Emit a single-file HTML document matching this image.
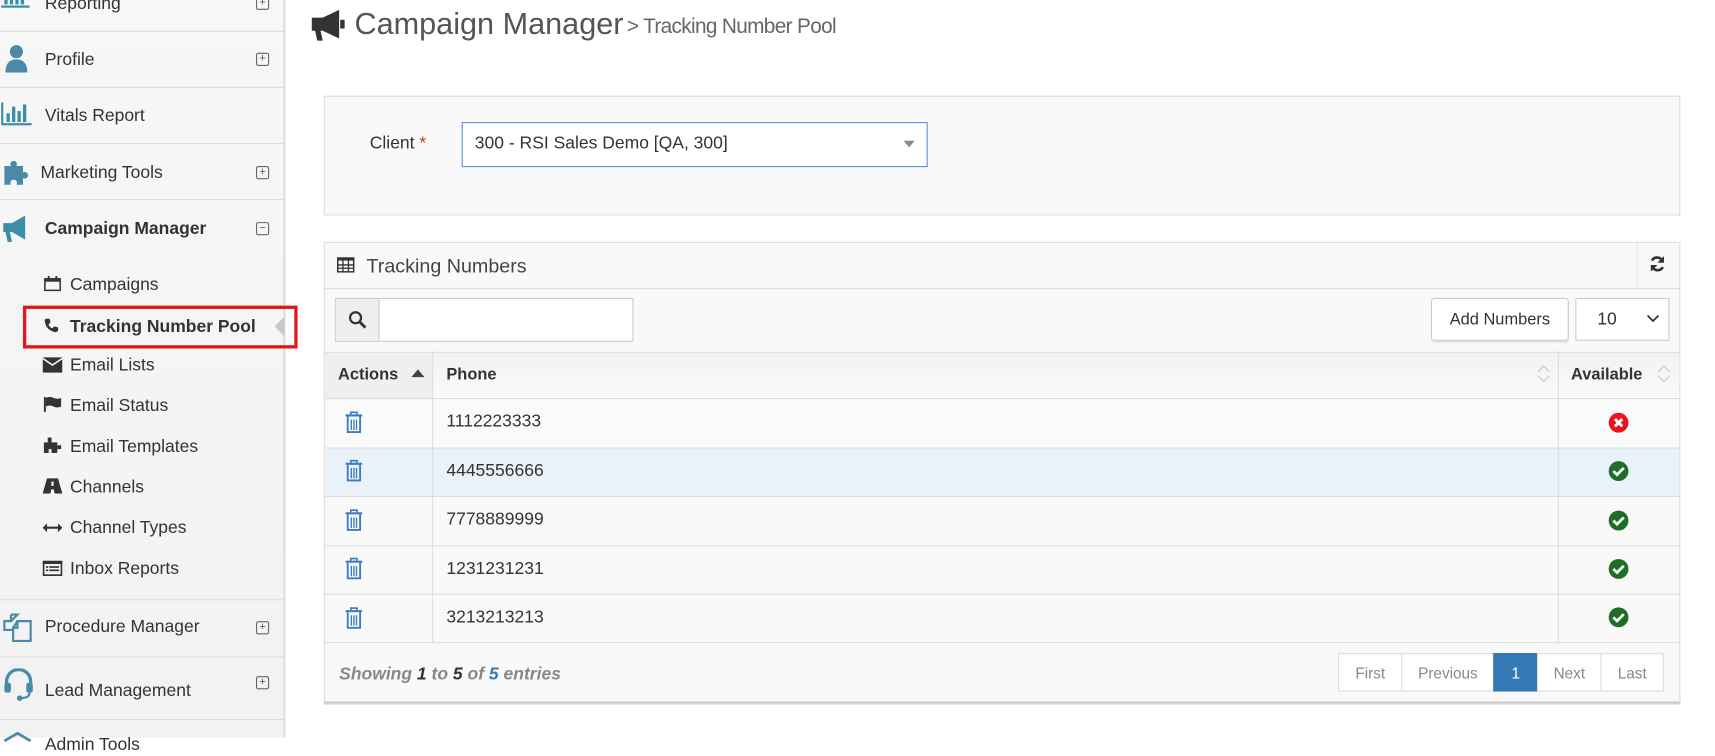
<!DOCTYPE html>
<html><head><meta charset="utf-8"><style>
html,body{margin:0;padding:0;width:1715px;height:737px;overflow:hidden;background:#fff;}
#w{position:absolute;left:0;top:0;width:1568px;height:671px;transform:scale(1.094,1.0994);transform-origin:0 0;font-family:"Liberation Sans",sans-serif;color:#333;}
.a{position:absolute;}
#side{left:0;top:0;width:259px;height:671px;background:linear-gradient(#f7f7f7,#f2f2f2);border-right:2px solid #ddd;}
.sep{position:absolute;left:0;width:259px;height:1px;background:#ddd;}
.mi{position:absolute;left:41px;font-size:16px;color:#333;line-height:20px;}
.pl{position:absolute;left:234px;width:10px;height:10px;border:1px solid #666;border-radius:2px;font-size:10px;line-height:9px;text-align:center;color:#555;}
.si{position:absolute;left:64px;font-size:16px;line-height:20px;color:#333;}
.ic{position:absolute;left:39px;width:18px;height:14px;}
.panel{position:absolute;left:296px;width:1238px;border:1px solid #ddd;background:#f9f9f9;}
.cell{position:absolute;font-size:16px;line-height:20px;}
.pg{position:absolute;top:594px;height:35px;border:1px solid #ddd;background:#fff;color:#888;font-size:14px;line-height:35px;text-align:center;box-sizing:border-box;}
</style></head><body><div id="w">
<div id="side" class="a">
 <svg class="a" style="left:1px;top:-8px" width="26" height="16"><g fill="#3b8ea5"><rect x="3" y="6" width="3" height="6"/><rect x="8" y="2" width="3" height="10"/><rect x="13" y="4" width="3" height="8"/><rect x="18" y="0" width="3" height="12"/><rect x="0" y="13" width="26" height="2"/></g></svg>
 <div class="mi" style="top:-6px">Reporting</div><div class="pl" style="top:-3px">+</div>
 <div class="sep" style="top:28px"></div>
 <svg class="a" style="left:5px;top:40px" width="22" height="26"><circle cx="10" cy="7" r="6" fill="#4a8aa8"/><path d="M0 26 Q0 14 10 14 Q20 14 20 26Z" fill="#4a8aa8"/></svg>
 <div class="mi" style="top:45px">Profile</div><div class="pl" style="top:48px">+</div>
 <div class="sep" style="top:79px"></div>
 <svg class="a" style="left:1px;top:93px" width="28" height="22"><g fill="#3b8ea5"><rect x="5" y="10" width="3" height="8"/><rect x="10" y="4" width="3" height="14"/><rect x="15" y="8" width="3" height="10"/><rect x="20" y="2" width="3" height="16"/><rect x="0" y="0" width="2" height="20"/><rect x="0" y="19" width="28" height="2"/></g></svg>
 <div class="mi" style="top:96px">Vitals Report</div>
 <div class="sep" style="top:130px"></div>
 <svg class="a" style="left:2px;top:143px" width="26" height="26"><path d="M2 8h6a3 3 0 1 1 5 0h6v6a3 3 0 1 1 0 5v6H13a3 3 0 1 0-5 0H2Z" fill="#4a8aa8"/></svg>
 <div class="mi" style="left:37px;top:148px">Marketing Tools</div><div class="pl" style="top:151px">+</div>
 <div class="sep" style="top:181px"></div>
 <svg class="a" style="left:1px;top:195px" width="28" height="26"><path d="M2 8h8l12-7v22l-12-7H8l2 9H6l-2-9H2Z" fill="#3b8ea5"/></svg>
 <div class="mi" style="top:199px;font-weight:bold">Campaign Manager</div><div class="pl" style="top:202px">−</div>
 <svg class="ic" style="top:251px" viewBox="0 0 18 16"><rect x="1" y="3" width="16" height="12" fill="none" stroke="#333" stroke-width="1.6"/><rect x="1" y="3" width="16" height="3" fill="#333"/><rect x="4" y="0" width="2" height="4" fill="#333"/><rect x="12" y="0" width="2" height="4" fill="#333"/></svg>
 <div class="si" style="top:250px">Campaigns</div>
 <div class="a" style="left:21px;top:278px;width:245px;height:33px;border:3px solid #e4141b;"></div>
 <svg class="ic" style="top:289px;width:16px" viewBox="0 0 16 16"><path d="M3 1l3 0 1 4-2 2q1 3 4 4l2-2 4 1v3q-1 2-3 2Q2 13 1 3q0-2 2-2Z" fill="#333"/></svg>
 <div class="si" style="top:288px;font-weight:bold">Tracking Number Pool</div>
 <div class="a" style="left:251px;top:288px;width:0;height:0;border-top:9px solid transparent;border-bottom:9px solid transparent;border-right:9px solid #c8c8c8"></div>
 <svg class="ic" style="top:325px" viewBox="0 0 18 14"><rect x="0" y="0" width="18" height="14" rx="1" fill="#333"/><path d="M0 1l9 6 9-6" stroke="#f5f5f5" stroke-width="1.5" fill="none"/></svg>
 <div class="si" style="top:323px">Email Lists</div>
 <svg class="ic" style="top:361px" viewBox="0 0 18 16"><rect x="0" y="0" width="2" height="16" fill="#333"/><path d="M2 1q4-2 8 0t8 0v9q-4 2-8 0t-8 0Z" fill="#333"/></svg>
 <div class="si" style="top:360px">Email Status</div>
 <svg class="ic" style="top:398px" viewBox="0 0 18 16"><rect x="4" y="0" width="4" height="5" fill="#333"/><rect x="0" y="5" width="14" height="11" fill="#333"/><rect x="14" y="8" width="4" height="4" fill="#333"/><rect x="5" y="12" width="3" height="4" fill="#f4f4f4"/></svg>
 <div class="si" style="top:397px">Email Templates</div>
 <svg class="ic" style="top:435px" viewBox="0 0 18 14"><path d="M4 0h10l4 14h-7l-1-4H8l-1 4H0Z" fill="#333"/><rect x="8" y="3" width="2" height="4" fill="#f5f5f5"/></svg>
 <div class="si" style="top:434px">Channels</div>
 <svg class="ic" style="top:473px" viewBox="0 0 18 8"><path d="M0 4l4-4v3h10V0l4 4-4 4V5H4v3Z" fill="#333"/></svg>
 <div class="si" style="top:471px">Channel Types</div>
 <svg class="ic" style="top:510px" viewBox="0 0 18 14"><rect x="0.8" y="0.8" width="16.4" height="12.4" fill="none" stroke="#333" stroke-width="1.6"/><rect x="0" y="0" width="18" height="3" fill="#333"/><g fill="#333"><rect x="3" y="5" width="2" height="1.5"/><rect x="6" y="5" width="9" height="1.5"/><rect x="3" y="8" width="2" height="1.5"/><rect x="6" y="8" width="9" height="1.5"/></g></svg>
 <div class="si" style="top:508px">Inbox Reports</div>
 <div class="sep" style="top:545px"></div>
 <svg class="a" style="left:2px;top:557px" width="28" height="28"><path d="M8 2h6l-6 6v0M8 2v6h-6v8h8" fill="none" stroke="#4a8aa8" stroke-width="2"/><path d="M14 8h12v18H10V14h4Z M10 14l4-6" fill="none" stroke="#4a8aa8" stroke-width="2"/></svg>
 <div class="mi" style="top:561px">Procedure Manager</div><div class="pl" style="top:565px">+</div>
 <div class="sep" style="top:597px"></div>
 <svg class="a" style="left:2px;top:608px" width="30" height="30"><path d="M4 16v-4a11 11 0 0 1 22 0v4" fill="none" stroke="#4a8aa8" stroke-width="3"/><rect x="2" y="13" width="6" height="9" rx="2" fill="#4a8aa8"/><rect x="22" y="13" width="6" height="9" rx="2" fill="#4a8aa8"/><path d="M25 22q0 5-8 5" fill="none" stroke="#4a8aa8" stroke-width="2"/><circle cx="16" cy="27" r="2.5" fill="#4a8aa8"/></svg>
 <div class="mi" style="top:619px">Lead Management</div><div class="pl" style="top:615px">+</div>
 <div class="sep" style="top:654px"></div>
 <svg class="a" style="left:2px;top:664px" width="30" height="12"><path d="M2 10L14 3l12 7" fill="none" stroke="#4a8aa8" stroke-width="2.5"/></svg>
 <div class="mi" style="top:668px">Admin Tools</div>
</div>

<svg class="a" style="left:283px;top:8px" width="34" height="30"><path d="M2 8h10l15-7v26l-15-7h-2l2 9H7l-2-9H2Z" fill="#333"/><rect x="28" y="10" width="4" height="8" fill="#333"/></svg>
<div class="a" style="left:324px;top:6px;font-size:28px;color:#555;">Campaign Manager</div>
<div class="a" style="left:573px;top:14px;font-size:19px;color:#666;letter-spacing:-0.6px">&gt; Tracking Number Pool</div>

<div class="panel" style="top:87px;height:107px;"></div>
<div class="a" style="left:338px;top:122px;font-size:16px">Client <span style="color:#c0392b">*</span></div>
<div class="a" style="left:422px;top:111px;width:424px;height:39px;border:1px solid #5b8fd8;background:#fff;"></div>
<div class="a" style="left:434px;top:122px;font-size:16px">300 - RSI Sales Demo [QA, 300]</div>
<div class="a" style="left:826px;top:128px;border-left:5px solid transparent;border-right:5px solid transparent;border-top:6px solid #888"></div>

<div class="panel" style="top:220px;height:419px;"></div>
<div class="a" style="left:297px;top:262px;width:1238px;height:1px;background:#ddd"></div>
<div class="a" style="left:1496px;top:221px;width:1px;height:41px;background:#e5e5e5"></div>
<svg class="a" style="left:308px;top:234px" width="16" height="14"><rect x="0.7" y="0.7" width="14.6" height="12.6" fill="none" stroke="#333" stroke-width="1.4"/><rect x="0" y="0" width="16" height="3" fill="#333"/><path d="M5.5 3v10M10.5 3v10M1 7h14M1 10h14" stroke="#333" stroke-width="1.2"/></svg>
<div class="a" style="left:335px;top:232px;font-size:18px;color:#444">Tracking Numbers</div>
<svg class="a" style="left:1507px;top:232px" width="16" height="16" viewBox="0 0 16 16"><path d="M13 6A5.5 5.5 0 0 0 3 5M3 10a5.5 5.5 0 0 0 10 1" fill="none" stroke="#333" stroke-width="2.4"/><path d="M14 1v6H8Z M2 15V9h6Z" fill="#333"/></svg>

<div class="a" style="left:306px;top:271px;width:271px;height:38px;border:1px solid #ccc;background:#fff;"></div>
<div class="a" style="left:307px;top:272px;width:39px;height:38px;background:#eee;border-right:1px solid #ccc;"></div>
<svg class="a" style="left:318px;top:282px" width="18" height="18"><circle cx="7" cy="7" r="5" fill="none" stroke="#333" stroke-width="2"/><path d="M11 11l5 5" stroke="#333" stroke-width="2.6"/></svg>
<div class="a" style="left:1308px;top:271px;width:124px;height:37px;border:1px solid #ccc;border-radius:3px;background:#fff;box-shadow:0 2px 0 #e5e5e5;font-size:15px;line-height:37px;text-align:center">Add Numbers</div>
<div class="a" style="left:1440px;top:271px;width:84px;height:37px;border:1px solid #ccc;background:#fff;font-size:16px;line-height:37px"><span style="margin-left:19px">10</span></div>
<svg class="a" style="left:1505px;top:286px" width="12" height="8"><path d="M1 1l5 5 5-5" fill="none" stroke="#333" stroke-width="1.6"/></svg>

<div class="a" style="left:297px;top:320px;width:1238px;height:41px;background:linear-gradient(#f2f2f2,#fafafa);border-top:1px solid #ddd;border-bottom:2px solid #ddd"></div>
<div class="a" style="left:297px;top:321px;width:98px;height:41px;background:#efefef"></div>
<div class="cell" style="left:309px;top:331px;font-weight:bold;font-size:15px">Actions</div>
<div class="a" style="left:376px;top:336px;border-left:6px solid transparent;border-right:6px solid transparent;border-bottom:7px solid #444"></div>
<div class="cell" style="left:408px;top:331px;font-weight:bold;font-size:15px">Phone</div>
<div class="cell" style="left:1436px;top:331px;font-weight:bold;font-size:15px">Available</div>
<svg class="a" style="left:1404px;top:330px" width="14" height="20"><path d="M2 8l5-5 5 5M2 12l5 5 5-5" fill="none" stroke="#ccc" stroke-width="1.2"/></svg>
<svg class="a" style="left:1514px;top:330px" width="14" height="20"><path d="M2 8l5-5 5 5M2 12l5 5 5-5" fill="none" stroke="#ccc" stroke-width="1.2"/></svg>

<div class="a" style="left:297px;top:363px;width:1238px;height:44px;background:#fafafa"></div>
<div class="a" style="left:297px;top:407px;width:1238px;height:44px;background:#eaf2f9;border-top:1px solid #ddd"></div>
<div class="a" style="left:297px;top:451px;width:1238px;height:1px;background:#ddd"></div>
<div class="a" style="left:297px;top:496px;width:1238px;height:1px;background:#ddd"></div>
<div class="a" style="left:297px;top:540px;width:1238px;height:1px;background:#ddd"></div>
<div class="a" style="left:297px;top:584px;width:1238px;height:1px;background:#ddd"></div>
<div class="a" style="left:395px;top:320px;width:1px;height:265px;background:#ddd"></div>
<div class="a" style="left:1424px;top:320px;width:1px;height:265px;background:#ddd"></div>

<div class="cell" style="left:408px;top:374px">1112223333</div>
<div class="cell" style="left:408px;top:419px">4445556666</div>
<div class="cell" style="left:408px;top:463px">7778889999</div>
<div class="cell" style="left:408px;top:508px">1231231231</div>
<div class="cell" style="left:408px;top:552px">3213213213</div>

<svg width="0" height="0" style="position:absolute"><symbol id="tr" viewBox="0 0 18 22"><path d="M6 3V1h6v2" fill="none" stroke="#3a7cc2" stroke-width="1.6"/><path d="M1 4h16" stroke="#3a7cc2" stroke-width="2"/><path d="M3 5v15h12V5" fill="none" stroke="#3a7cc2" stroke-width="1.8"/><path d="M6.5 8v10M9 8v10M11.5 8v10" stroke="#3a7cc2" stroke-width="1.3"/></symbol>
<symbol id="ok" viewBox="0 0 20 20"><circle cx="10" cy="10" r="9.5" fill="#1e6e2a"/><path d="M5 10l3.5 3.5L15 7" fill="none" stroke="#fff" stroke-width="2.6"/></symbol></svg>
<svg class="a" style="left:315px;top:374px" width="17" height="21"><use href="#tr"/></svg>
<svg class="a" style="left:315px;top:418px" width="17" height="21"><use href="#tr"/></svg>
<svg class="a" style="left:315px;top:463px" width="17" height="21"><use href="#tr"/></svg>
<svg class="a" style="left:315px;top:507px" width="17" height="21"><use href="#tr"/></svg>
<svg class="a" style="left:315px;top:552px" width="17" height="21"><use href="#tr"/></svg>

<svg class="a" style="left:1470px;top:375px" width="19" height="19" viewBox="0 0 20 20"><circle cx="10" cy="10" r="9.5" fill="#e8141b"/><path d="M6.5 6.5l7 7M13.5 6.5l-7 7" stroke="#fff" stroke-width="2.8"/></svg>
<svg class="a" style="left:1470px;top:419px" width="19" height="19"><use href="#ok"/></svg>
<svg class="a" style="left:1470px;top:464px" width="19" height="19"><use href="#ok"/></svg>
<svg class="a" style="left:1470px;top:508px" width="19" height="19"><use href="#ok"/></svg>
<svg class="a" style="left:1470px;top:552px" width="19" height="19"><use href="#ok"/></svg>

<div class="a" style="left:296px;top:638px;width:1240px;height:2px;background:#ccc"></div>
<div class="cell" style="left:310px;top:604px;font-style:italic;font-weight:bold;color:#888">Showing <span style="color:#333">1</span> to <span style="color:#333">5</span> of <span style="color:#337ab7">5</span> entries</div>
<div class="pg" style="left:1223px;width:59px">First</div>
<div class="pg" style="left:1281px;width:85px">Previous</div>
<div class="pg" style="left:1365px;width:41px;background:#337ab7;border-color:#337ab7;color:#fff">1</div>
<div class="pg" style="left:1405px;width:59px">Next</div>
<div class="pg" style="left:1463px;width:58px">Last</div>
</div></body></html>
